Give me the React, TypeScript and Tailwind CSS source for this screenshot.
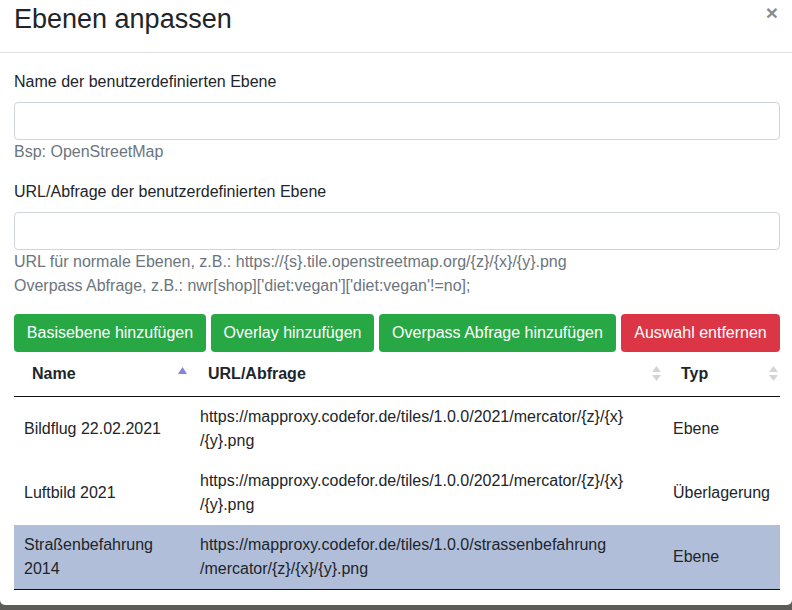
import React from "react";

const rows = [
  {
    name: ["Bildflug 22.02.2021"],
    url: ["https://mapproxy.codefor.de/tiles/1.0.0/2021/mercator/{z}/{x}", "/{y}.png"],
    type: "Ebene",
    selected: false,
  },
  {
    name: ["Luftbild 2021"],
    url: ["https://mapproxy.codefor.de/tiles/1.0.0/2021/mercator/{z}/{x}", "/{y}.png"],
    type: "Überlagerung",
    selected: false,
  },
  {
    name: ["Straßenbefahrung", "2014"],
    url: ["https://mapproxy.codefor.de/tiles/1.0.0/strassenbefahrung", "/mercator/{z}/{x}/{y}.png"],
    type: "Ebene",
    selected: true,
  },
];

function SortIcon({ active }: { active?: boolean }) {
  if (active) {
    return (
      <svg width="9" height="7" viewBox="0 0 9 7" className="absolute right-[3px] top-[15px]">
        <path d="M4.5 0 L9 7 L0 7 Z" fill="#8484dc" />
      </svg>
    );
  }
  return (
    <svg width="9" height="15" viewBox="0 0 9 15" className="absolute right-[2px] top-[14px]">
      <path d="M4.5 0 L9 6 L0 6 Z" fill="#d4d4d4" />
      <path d="M0 9 L9 9 L4.5 15 Z" fill="#d4d4d4" />
    </svg>
  );
}

export default function App() {
  return (
    <div
      className="w-[792px] h-[610px] bg-[#5d5c57] overflow-hidden text-[#212529]"
      style={{ fontFamily: '"Liberation Sans", Arial, sans-serif' }}
    >
      <div className="bg-white rounded-b-[5px]">
        <div className="h-[53px] border-b border-[#dee2e6] flex justify-between pl-[14px] pr-[14px]">
          <h4 className="text-[27px] leading-[32px] pt-[3px] font-normal">Ebenen anpassen</h4>
          <span className="text-[21px] leading-[24px] font-bold text-[#8c8c8c] pt-[1px]">×</span>
        </div>

        <div className="pl-[14px] pr-[12px] pt-[17px] pb-[15px]">
          <div className="mb-[16px]">
            <label className="block text-base leading-6 mb-2">Name der benutzerdefinierten Ebene</label>
            <input
              type="text"
              className="block w-full h-[38px] border border-[#ced4da] rounded-[4px] px-3 outline-none"
            />
            <div className="text-base leading-6 text-[#6c757d]">Bsp: OpenStreetMap</div>
          </div>

          <div className="mb-[16px]">
            <label className="block text-base leading-6 mb-2">URL/Abfrage der benutzerdefinierten Ebene</label>
            <input
              type="text"
              className="block w-full h-[38px] border border-[#ced4da] rounded-[4px] px-3 outline-none"
            />
            <div className="text-base leading-6 text-[#6c757d]">
              URL für normale Ebenen, z.B.: https://{"{s}"}.tile.openstreetmap.org/{"{z}"}/{"{x}"}/{"{y}"}.png
            </div>
            <div className="text-base leading-6 text-[#6c757d]">
              Overpass Abfrage, z.B.: nwr[shop]['diet:vegan']['diet:vegan'!=no];
            </div>
          </div>

          <div className="flex gap-[5px]">
            <button className="w-[192px] shrink-0 whitespace-nowrap h-[38px] rounded-[4px] bg-[#28a745] text-white text-base">Basisebene hinzufügen</button>
            <button className="w-[163px] shrink-0 whitespace-nowrap h-[38px] rounded-[4px] bg-[#28a745] text-white text-base">Overlay hinzufügen</button>
            <button className="w-[237px] shrink-0 whitespace-nowrap h-[38px] rounded-[4px] bg-[#28a745] text-white text-base">Overpass Abfrage hinzufügen</button>
            <button className="w-[159px] shrink-0 whitespace-nowrap h-[38px] rounded-[4px] bg-[#dc3545] text-white text-base">Auswahl entfernen</button>
          </div>

          <table className="w-full table-fixed border-collapse text-base leading-6">
            <colgroup>
              <col className="w-[176px]" />
              <col className="w-[473px]" />
              <col />
            </colgroup>
            <thead>
              <tr className="border-b border-[#111]">
                <th className="relative text-left font-bold pl-[18px] py-[10px]">
                  Name
                  <SortIcon active />
                </th>
                <th className="relative text-left font-bold pl-[18px] py-[10px]">
                  URL/Abfrage
                  <SortIcon />
                </th>
                <th className="relative text-left font-bold pl-[18px] py-[10px]">
                  Typ
                  <SortIcon />
                </th>
              </tr>
            </thead>
            <tbody>
              {rows.map((r, i) => (
                <tr
                  key={i}
                  className={`${r.selected ? "bg-[#b0bed9]" : ""} ${i === rows.length - 1 ? "border-b border-[#111]" : ""}`}
                >
                  <td className="align-middle px-[10px] py-[8px]">
                    {r.name.map((n, j) => (
                      <div key={j}>{n}</div>
                    ))}
                  </td>
                  <td className="align-middle px-[10px] py-[8px] whitespace-nowrap">
                    {r.url.map((u, j) => (
                      <div key={j}>{u}</div>
                    ))}
                  </td>
                  <td className="align-middle px-[10px] py-[8px] whitespace-nowrap">{r.type}</td>
                </tr>
              ))}
            </tbody>
          </table>
        </div>
      </div>
    </div>
  );
}
